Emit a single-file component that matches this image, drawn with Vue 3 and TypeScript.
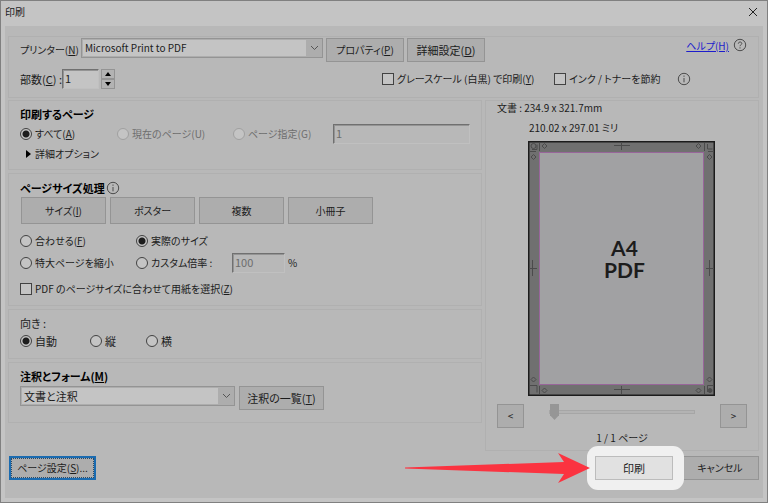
<script setup lang="ts">
import { ref } from 'vue'

interface Mode {
  label: string
  key?: string
}

const printer = ref('Microsoft Print to PDF')
const copies = ref('1')
const range = ref('all')
const rangeText = ref('1')
const sizing = ref('actual')
const scale = ref('100')
const orientation = ref('auto')
const content = ref('文書と注釈')
const grayscale = ref(false)
const saveInk = ref(false)
const matchPaper = ref(false)
const page = ref(1)

const modes: Mode[] = [
  { label: 'サイズ', key: 'I' },
  { label: 'ポスター' },
  { label: '複数' },
  { label: '小冊子' },
]

function step(delta: number) {
  copies.value = String(Math.max(1, Number(copies.value) + delta))
}
</script>

<template>
  <main class="dialog">
    <header class="titlebar">
      <h1>印刷</h1>
      <button class="close" type="button" aria-label="閉じる">
        <svg width="10" height="10" viewBox="0 0 10 10"><path d="M1 1l8 8M9 1l-8 8" /></svg>
      </button>
    </header>

    <form class="body" @submit.prevent>
      <section class="panel printer">
        <div class="row first">
          <label class="lead" for="printer">プリンター(<u>N</u>) :</label>
          <span class="combo wide">
            <select id="printer" v-model="printer">
              <option>Microsoft Print to PDF</option>
            </select>
            <svg width="9" height="6" viewBox="0 0 9 6"><path d="M1 1l3.5 3.5L8 1" /></svg>
          </span>
          <button class="btn prop" type="button">プロパティ(<u>P</u>)</button>
          <button class="btn prop large" type="button">詳細設定(<u>D</u>)</button>
          <div class="help">
            <a href="#help">ヘルプ(H)</a>
            <svg class="info" width="14" height="14" viewBox="0 0 14 14">
              <circle cx="7" cy="7" r="5.7" />
              <path d="M5.3 5.7c0-2.3 3.5-2.2 3.5-.2 0 1.3-1.8 1.3-1.8 2.7M7 9.3v1.2" />
            </svg>
          </div>
        </div>
        <div class="row second">
          <label class="copies-label large" for="copies">部数(<u>C</u>) :</label>
          <input id="copies" v-model="copies" class="field copies" type="text" />
          <span class="spin">
            <button type="button" aria-label="増やす" @click="step(1)">
              <svg width="6" height="4" viewBox="0 0 6 4"><path d="M0 4l3-4 3 4z" /></svg>
            </button>
            <button type="button" aria-label="減らす" @click="step(-1)">
              <svg width="6" height="4" viewBox="0 0 6 4"><path d="M0 0l3 4 3-4z" /></svg>
            </button>
          </span>
          <div class="options">
            <label class="choice"><input v-model="grayscale" type="checkbox" /><span>グレースケール (白黒) で印刷(<u>Y</u>)</span></label>
            <label class="choice"><input v-model="saveInk" type="checkbox" /><span>インク / トナーを節約</span></label>
            <svg class="info" width="14" height="14" viewBox="0 0 14 14">
              <circle cx="7" cy="7" r="5.7" />
              <path d="M7 6v4.3M7 3.5v1.3" />
            </svg>
          </div>
        </div>
      </section>

      <div class="columns">
        <div class="settings">
          <section class="panel pages">
            <h2>印刷するページ</h2>
            <div class="range">
              <label class="choice"><input v-model="range" type="radio" name="range" value="all" /><span>すべて(<u>A</u>)</span></label>
              <label class="choice off"><input v-model="range" type="radio" name="range" value="current" disabled /><span>現在のページ(U)</span></label>
              <label class="choice off"><input v-model="range" type="radio" name="range" value="custom" disabled /><span>ページ指定(G)</span></label>
              <input v-model="rangeText" class="field" type="text" aria-label="ページ指定" disabled />
            </div>
            <button class="more" type="button">
              <svg width="5" height="8" viewBox="0 0 5 8"><path d="M0 0l5 4-5 4z" /></svg>
              詳細オプション
            </button>
          </section>

          <section class="panel sizing">
            <h2>
              ページサイズ処理
              <svg class="info" width="14" height="14" viewBox="0 0 14 14">
                <circle cx="7" cy="7" r="5.7" />
                <path d="M7 6v4.3M7 3.5v1.3" />
              </svg>
            </h2>
            <div class="modes">
              <button v-for="mode in modes" :key="mode.label" class="btn" type="button">
                {{ mode.label }}<template v-if="mode.key">(<u>{{ mode.key }}</u>)</template>
              </button>
            </div>
            <div class="fit">
              <label class="choice"><input v-model="sizing" type="radio" name="sizing" value="fit" /><span>合わせる(<u>F</u>)</span></label>
              <label class="choice"><input v-model="sizing" type="radio" name="sizing" value="actual" /><span>実際のサイズ</span></label>
            </div>
            <div class="fit">
              <label class="choice"><input v-model="sizing" type="radio" name="sizing" value="shrink" /><span>特大ページを縮小</span></label>
              <label class="choice"><input v-model="sizing" type="radio" name="sizing" value="scale" /><span>カスタム倍率 :</span></label>
              <input v-model="scale" class="field" type="text" aria-label="カスタム倍率" disabled />
              <span class="percent">%</span>
            </div>
            <label class="choice paper"><input v-model="matchPaper" type="checkbox" /><span>PDF のページサイズに合わせて用紙を選択(<u>Z</u>)</span></label>
          </section>

          <section class="panel orient large">
            <p>向き :</p>
            <div class="turns">
              <label class="choice"><input v-model="orientation" type="radio" name="orientation" value="auto" /><span>自動</span></label>
              <label class="choice"><input v-model="orientation" type="radio" name="orientation" value="portrait" /><span>縦</span></label>
              <label class="choice"><input v-model="orientation" type="radio" name="orientation" value="landscape" /><span>横</span></label>
            </div>
          </section>

          <section class="panel forms large">
            <h2><label for="content">注釈とフォーム(<u>M</u>)</label></h2>
            <div class="row">
              <span class="combo">
                <select id="content" v-model="content">
                  <option>文書と注釈</option>
                </select>
                <svg width="9" height="6" viewBox="0 0 9 6"><path d="M1 1l3.5 3.5L8 1" /></svg>
              </span>
              <button class="btn list" type="button">注釈の一覧(<u>T</u>)</button>
            </div>
          </section>
        </div>

        <section class="panel preview">
          <p class="doc">文書 : 234.9 x 321.7mm</p>
          <p class="paper-size">210.02 x 297.01 ミリ</p>
          <div class="sheet">
            <svg width="187" height="255" viewBox="0 0 187 255">
              <rect x=".75" y=".75" width="185.5" height="253.5" fill="#707070" stroke="#1c1c1c" stroke-width="1.5" />
              <rect x="11.5" y="11.5" width="164" height="232" fill="#a1a1a3" stroke="#98659a" />
              <g fill="none" stroke="#4b4b4b">
                <path d="M86 4.5h16M93.5 1v8M86 248.5h16M93.5 245v8M1 127.5h8M4.5 119v16M178 127.5h8M181.5 119v16" />
                <path d="M2 10.5h6M11.5 2v8M4 8.5h5v-5M176.5 2v8M180 10.5h6M179.5 3v5h5M2 244.5h7v7M11.5 245v8M176.5 245v8M179.5 251v-6.5h6" />
                <path d="M16.5 2.5l2.5 2.5-2.5 2.5-2.5-2.5zM170.5 2.5l2.5 2.5-2.5 2.5-2.5-2.5zM5.5 13.5l2.5 2.5-2.5 2.5-2.5-2.5zM181.5 13.5l2.5 2.5-2.5 2.5-2.5-2.5zM5.5 236l2.5 2.5-2.5 2.5-2.5-2.5zM181.5 236l2.5 2.5-2.5 2.5-2.5-2.5zM16.5 247l2.5 2.5-2.5 2.5-2.5-2.5zM170.5 247l2.5 2.5-2.5 2.5-2.5-2.5z" />
                <circle cx="5.5" cy="5" r="2.5" />
                <circle cx="182" cy="249.5" r="2" fill="#4b4b4b" />
              </g>
            </svg>
            <p class="sheet-name">A4<br />PDF</p>
          </div>
          <div class="pager">
            <button class="btn" type="button" aria-label="前のページ">&lt;</button>
            <input v-model.number="page" type="range" min="1" max="2" aria-label="ページ" />
            <button class="btn" type="button" aria-label="次のページ">&gt;</button>
          </div>
          <p class="count">1 / 1 ページ</p>
        </section>
      </div>

      <footer class="actions">
        <button class="btn setup" type="button">ページ設定(<u>S</u>)...</button>
        <span class="spotlight">
          <svg class="arrow" width="186" height="32" viewBox="0 0 186 32">
            <path d="M0 15.5L159 10 153 1l32 15-32 15 6-9L0 16.5z" />
          </svg>
          <button class="btn large" type="submit">印刷</button>
        </span>
        <button class="btn cancel" type="button">キャンセル</button>
      </footer>
    </form>
  </main>
</template>

<style>
body {
  margin: 0;
  background: #7c7c7c;
}
</style>

<style scoped>
* {
  box-sizing: border-box;
}

.dialog {
  min-height: 100vh;
  padding: 0 4px 4px;
  border: 1px solid #808080;
  background: #c4c4c4;
  color: #1c1c1c;
  font-family: "Noto Sans CJK JP", sans-serif;
  font-size: 10px;
  line-height: 16px;
  font-feature-settings: "palt";
}

button,
input,
select {
  margin: 0;
  font: inherit;
  color: inherit;
  font-feature-settings: inherit;
}

h1,
h2,
p {
  margin: 0;
  font-size: inherit;
  font-weight: 400;
}

h2 {
  display: flex;
  align-items: center;
  gap: 1px;
  height: 16px;
  color: #000;
  font-size: 11px;
  font-weight: 700;
}

svg {
  display: block;
  flex: none;
}

.large {
  font-size: 11px;
}

.titlebar {
  display: flex;
  align-items: center;
  justify-content: space-between;
  height: 25px;
  padding: 0 5px 4px 0;
}

.close {
  padding: 0;
  border: 0;
  background: none;
}

.close path {
  fill: none;
  stroke: #222;
}

.body {
  padding: 10px 4px 18px 3px;
  background: #b8b8b8;
}

.panel {
  border: 1px solid #b0b0b0;
  padding: 0 11px;
}

.row {
  display: flex;
}

.btn {
  height: 24px;
  padding: 0;
  border: 1px solid #949494;
  background: #adadad;
  text-align: center;
  white-space: nowrap;
}

.field {
  width: 100%;
  height: 20px;
  padding: 0 2px 2px;
  border: 1px solid;
  border-color: #707070 #c0c0c0 #c0c0c0 #707070;
  box-shadow: inset 1px 1px #949494;
  border-radius: 0;
  background: #c4c4c4;
  font-size: 11px;
}

.field:disabled {
  background: #b8b8b8;
  color: #6d6d6d;
}

.combo {
  display: grid;
  grid-template-columns: 1fr 16px;
  align-items: center;
  width: 215px;
  height: 20px;
  border: 1px solid #949494;
  background: #adadad;
}

.combo select {
  grid-area: 1 / 1 / 2 / 3;
  appearance: none;
  width: 100%;
  height: 18px;
  padding: 0 18px 0 2px;
  border: 1px solid #adadad;
  border-radius: 0;
  background: linear-gradient(#c4c4c4, #c4c4c4) no-repeat left / calc(100% - 15px) 100%;
}

.combo svg {
  grid-area: 1 / 2;
  justify-self: center;
  pointer-events: none;
  fill: none;
  stroke: #555;
}

.wide {
  width: 242px;
}

.choice {
  display: flex;
  align-items: center;
  gap: 3px;
  white-space: nowrap;
}

.choice input {
  appearance: none;
  flex: none;
  width: 12px;
  height: 12px;
  border: 1px solid #424242;
  background: #c4c4c4;
}

.choice input[type="radio"] {
  border-radius: 50%;
}

.choice input:checked {
  background: radial-gradient(circle, #1d1d1d 3px, #c4c4c4 4px);
}

.off {
  color: #6d6d6d;
}

.off input[type="radio"] {
  border-color: #a0a0a0;
}

.info {
  fill: none;
  stroke: #4c4c4c;
}

.printer {
  height: 62px;
  padding-top: 1px;
}

.first {
  align-items: flex-start;
}

.lead {
  width: 61px;
  padding-top: 4px;
  white-space: nowrap;
}

.prop {
  width: 78px;
  margin-left: 3px;
}

.help {
  display: flex;
  gap: 4px;
  margin-left: auto;
}

.help a {
  color: #1c1ccc;
}

.second {
  align-items: center;
  height: 20px;
  margin-top: 7px;
}

.copies-label {
  width: 42px;
  white-space: nowrap;
}

.copies {
  width: 37px;
}

.spin {
  display: grid;
  grid-template-rows: 10px 10px;
  width: 14px;
  margin-left: 2px;
}

.spin button {
  display: grid;
  place-items: center;
  padding: 0;
  border: 1px solid #949494;
  background: #b3b3b3;
}

.options {
  display: grid;
  grid-template-columns: 172px 123px 14px;
  align-items: center;
  margin-left: auto;
  margin-right: 56px;
}

.columns {
  display: grid;
  grid-template-columns: minmax(0, 1fr) 274px;
  gap: 3px;
  margin-top: 2px;
}

.settings {
  display: grid;
  align-content: start;
  gap: 3px;
}

.pages {
  height: 70px;
  padding-top: 5px;
}

.range {
  display: grid;
  grid-template-columns: 97px 116px 100px 137px;
  align-items: center;
  height: 20px;
  margin-top: 2px;
}

.more {
  display: flex;
  align-items: center;
  gap: 4px;
  height: 20px;
  padding: 0 0 0 6px;
  border: 0;
  background: none;
}

.sizing {
  height: 133px;
  padding-top: 6px;
}

.modes {
  display: grid;
  grid-template-columns: repeat(4, 85px);
  gap: 4px;
  margin: 1px 0 6px 1px;
}

.modes .btn {
  height: 27px;
}

.fit {
  display: grid;
  grid-template-columns: 116px 96px 53px auto;
  align-items: center;
  height: 22px;
}

.percent {
  padding-left: 3px;
}

.paper {
  margin-top: 7px;
}

.orient {
  height: 50px;
  padding-top: 5px;
}

.turns {
  display: grid;
  grid-template-columns: 70px 56px auto;
  margin-top: 2px;
}

.forms {
  height: 61px;
  padding-top: 5px;
}

.forms .row {
  gap: 4px;
  margin-top: 2px;
}

.list {
  width: 85px;
}

.preview {
  height: 351px;
  line-height: 14px;
}

.doc {
  margin-bottom: 6px;
}

.paper-size {
  padding-left: 32px;
  margin-bottom: 6px;
}

.sheet {
  display: grid;
  width: 187px;
  margin-left: 31px;
}

.sheet > * {
  grid-area: 1 / 1;
}

.sheet-name {
  place-self: center;
  padding: 0 0 20px 6px;
  font-family: Lato, sans-serif;
  font-size: 21px;
  font-weight: 700;
  line-height: 22px;
  text-align: center;
}

.pager {
  display: flex;
  justify-content: space-between;
  margin-top: 8px;
}

.pager .btn {
  width: 27px;
}

.pager input {
  appearance: none;
  width: 146px;
  height: 16px;
  background: none;
}

.pager input::-webkit-slider-runnable-track {
  height: 4px;
  border: 1px solid #a6a6a6;
  background: #b3b3b3;
}

.pager input::-webkit-slider-thumb {
  appearance: none;
  width: 9px;
  height: 16px;
  margin-top: -7px;
  background: #969696;
  clip-path: polygon(0 0, 100% 0, 100% 70%, 50% 100%, 0 70%);
}

.count {
  margin-top: 3px;
  text-align: center;
}

.actions {
  display: flex;
  margin-top: 5px;
  padding-left: 1px;
}

.actions .btn {
  width: 78px;
}

.actions .setup {
  width: 87px;
  border: 2px solid #1a6bb0;
  outline: 1px dotted #2b4a66;
  outline-offset: -3px;
}

.spotlight {
  position: relative;
  z-index: 1;
  margin-left: auto;
}

.spotlight::before {
  content: "";
  position: absolute;
  inset: -10px -11px -10px -8px;
  border-radius: 11px;
  background: #f0f0f0;
}

.spotlight .btn {
  position: relative;
  display: block;
  border-color: #bcbcbc;
  background: #e1e1e1;
}

.arrow {
  position: absolute;
  right: 82px;
  top: -4px;
  pointer-events: none;
  fill: #fb3340;
}

.actions .cancel {
  margin-left: 8px;
}
</style>
